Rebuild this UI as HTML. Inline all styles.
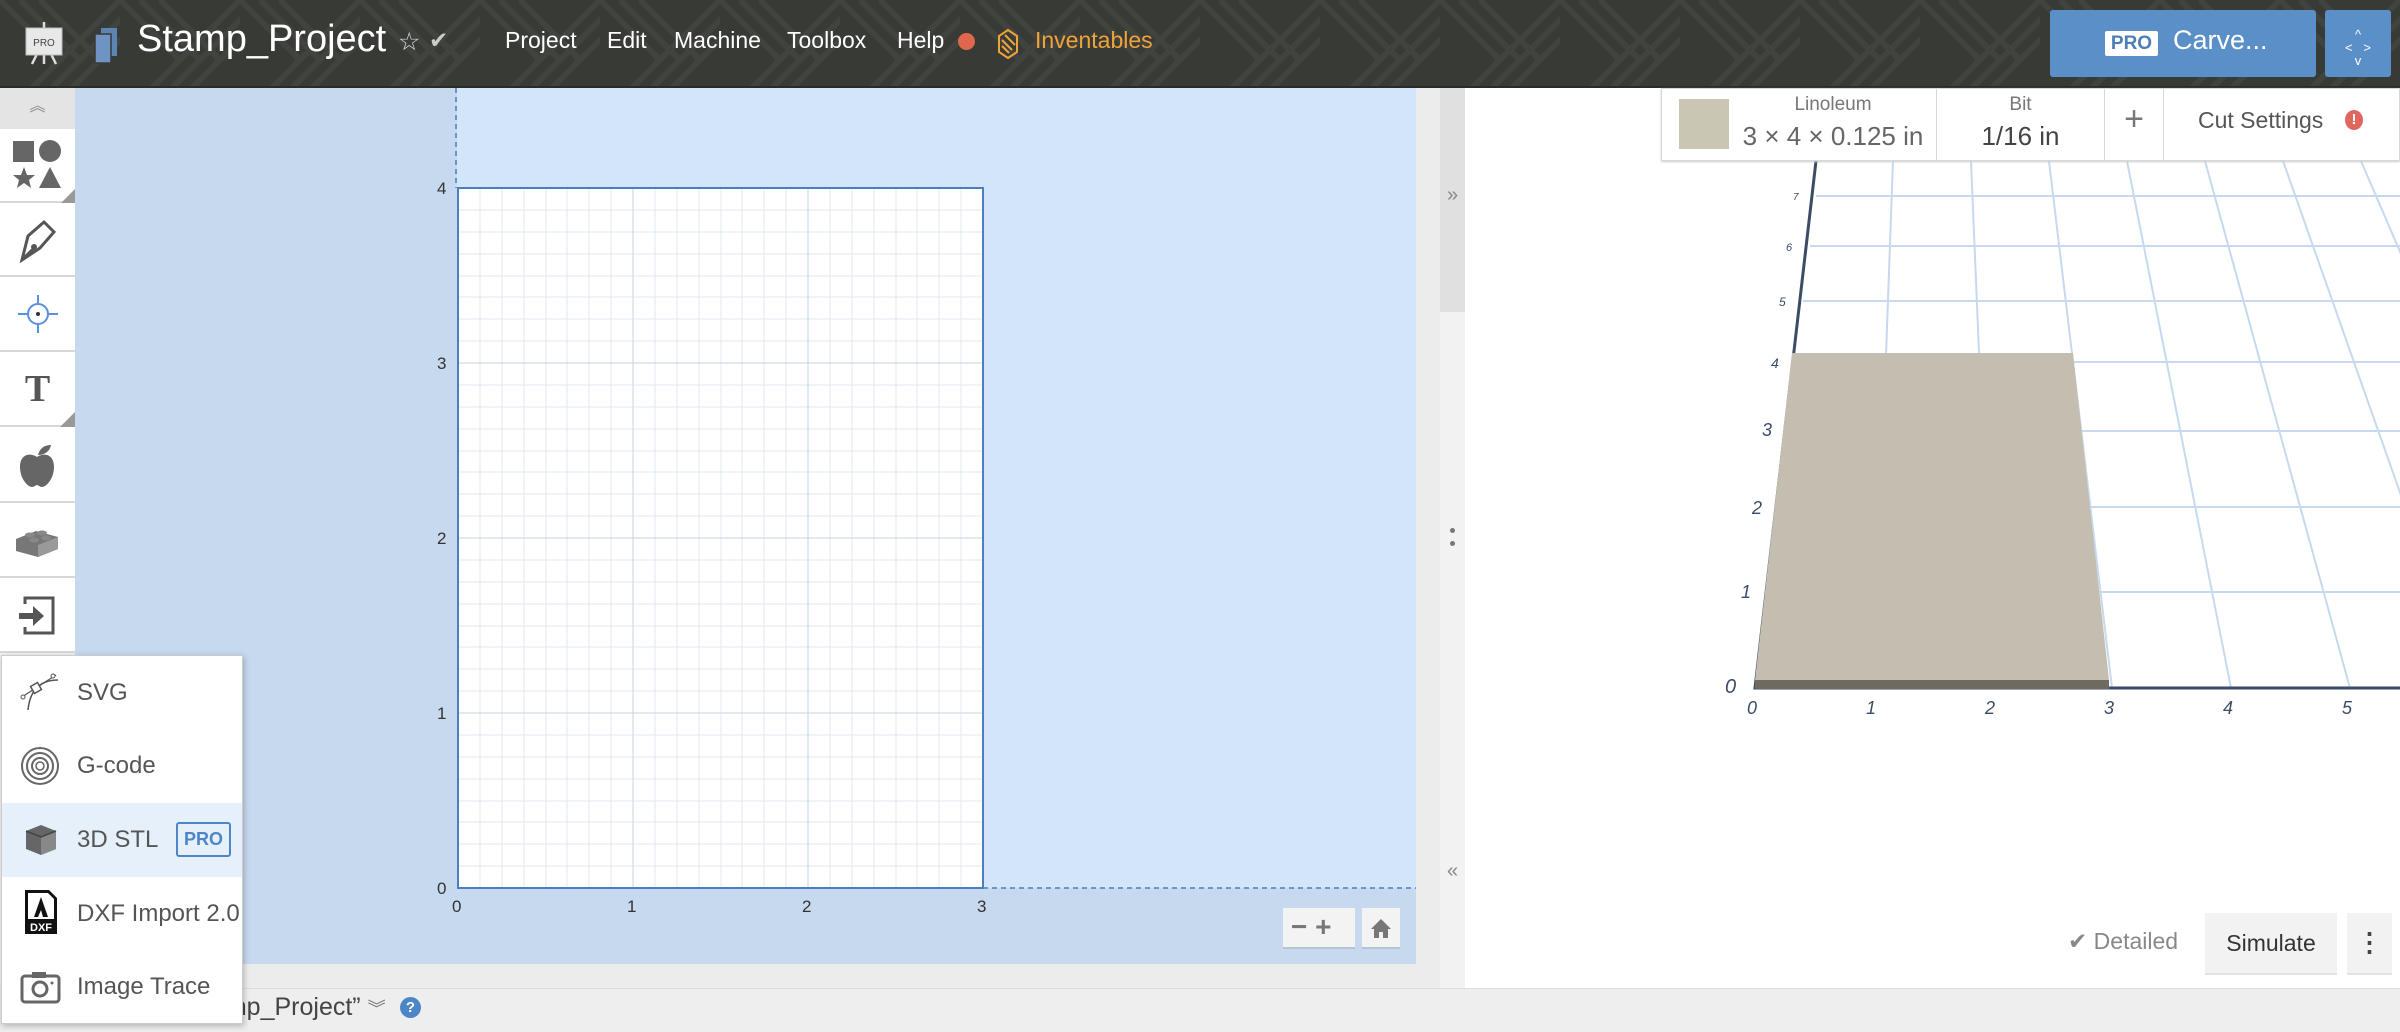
<!DOCTYPE html>
<html><head><meta charset="utf-8"><style>
*{margin:0;padding:0;box-sizing:border-box}
body{width:2400px;height:1032px;overflow:hidden;font-family:"Liberation Sans",sans-serif;background:#fff;position:relative}
.a{position:absolute}
.hdr{left:0;top:0;width:2400px;height:88px;background:#383a36;border-bottom:2px solid #2a2b29}
.menu{color:#fff;font-size:23px;top:27px}
.tb{left:0;width:75px;background:#fff;border-bottom:2px solid #d8d8d8}
.mi{left:2px;width:240px;height:73px;font-size:24px;color:#555;display:flex;align-items:center}
.mi span{position:absolute;left:75px}
</style></head><body>

<!-- header -->
<div class="a hdr">
<svg class="a" style="left:0;top:0" width="2400" height="86">
<defs><pattern id="p" width="120" height="120" patternUnits="userSpaceOnUse">
<path d="M0 0L60 60M20 0L80 60M40 0L100 60M60 60L120 0M80 60L140 0M100 60L160 0M0 120L60 60M20 120L80 60M40 120L100 60" stroke="#41433f" stroke-width="6" fill="none"/></pattern></defs>
<rect width="2400" height="86" fill="url(#p)"/>
</svg>
<svg class="a" style="left:22px;top:20px" width="44" height="48"><path d="M22 2v6M10 44l5-10M34 44l-5-10M22 34v10" stroke="#ddd" stroke-width="2.5"/><rect x="4" y="8" width="36" height="27" fill="#e8e8e8" stroke="#bbb"/><text x="22" y="26" font-size="10" text-anchor="middle" fill="#444" font-family="Liberation Sans">PRO</text></svg>
<svg class="a" style="left:94px;top:28px" width="24" height="36"><rect x="7" y="0" width="16" height="28" fill="#5d85b3"/><rect x="1" y="6" width="16" height="29" fill="#6d94c2" stroke="#383a36" stroke-width="1.5"/></svg>
<div class="a" style="left:137px;top:18px;color:#fff;font-size:38px">Stamp_Project</div>
<div class="a" style="left:398px;top:27px;color:#ddd;font-size:25px">☆</div>
<div class="a" style="left:429px;top:27px;color:#ccc;font-size:23px">✔</div>
<div class="a menu" style="left:505px">Project</div>
<div class="a menu" style="left:607px">Edit</div>
<div class="a menu" style="left:674px">Machine</div>
<div class="a menu" style="left:787px">Toolbox</div>
<div class="a menu" style="left:897px">Help</div>
<div class="a" style="left:958px;top:33px;width:17px;height:17px;border-radius:50%;background:#e0674d"></div>
<svg class="a" style="left:997px;top:28px" width="22" height="32"><path d="M11 2L20 8V24L11 30L2 24V8Z M5 12L15 22M5 18L12 25M8 7L18 17" stroke="#f0a33a" stroke-width="2" fill="none"/></svg>
<div class="a menu" style="left:1035px;color:#f0a33a">Inventables</div>
<div class="a" style="left:2050px;top:10px;width:266px;height:67px;background:#5b8fc7;border-radius:3px"></div>
<div class="a" style="left:2105px;top:31px;width:53px;height:25px;background:#fff;border-radius:2px;color:#4d7eb5;font-weight:bold;font-size:19px;text-align:center;line-height:25px">PRO</div>
<div class="a" style="left:2173px;top:25px;color:#fff;font-size:27px">Carve...</div>
<div class="a" style="left:2325px;top:10px;width:66px;height:67px;background:#5b8fc7;border-radius:3px;color:#fff;font-size:13px;text-align:center;line-height:13px;padding-top:18px">^<br>&lt;&nbsp;&nbsp;&nbsp;&gt;<br>v</div>
</div>

<!-- left toolbar -->
<div class="a" style="left:0;top:88px;width:75px;height:900px;background:#f2f2f2"></div>
<div class="a" style="left:0;top:88px;width:75px;height:41px;background:#e4e4e4;color:#888;text-align:center;font-size:16px;line-height:38px">︽</div>
<div class="a tb" style="top:129px;height:74px"><svg width="75" height="74"><rect x="13" y="12" width="21" height="21" fill="#666"/><circle cx="50" cy="22" r="11" fill="#666"/><path d="M24 38l3 8h8l-6 5 2 8-7-5-7 5 2-8-6-5h8z" fill="#666"/><path d="M50 38l11 21H39z" fill="#666"/><path d="M75 60V74H61z" fill="#999"/></svg></div>
<div class="a tb" style="top:203px;height:74px"><svg width="75" height="74"><path d="M22 57l6-24 16-14 10 10-14 16z M22 57l12-12" stroke="#555" stroke-width="3" fill="none"/><circle cx="34" cy="44" r="3" fill="#555"/></svg></div>
<div class="a tb" style="top:277px;height:75px"><svg width="75" height="75"><circle cx="38" cy="37" r="10" stroke="#5b8fe0" stroke-width="2" fill="none"/><path d="M38 18v10M38 46v10M18 37h10M48 37h10" stroke="#5b8fe0" stroke-width="2"/><circle cx="38" cy="37" r="2" fill="#333"/></svg></div>
<div class="a tb" style="top:352px;height:75px"><div style="font-family:'Liberation Serif',serif;font-weight:bold;font-size:38px;color:#555;text-align:center;line-height:75px">T</div><svg class="a" style="left:0;top:0" width="75" height="75"><path d="M75 60V75H60z" fill="#999"/></svg></div>
<div class="a tb" style="top:427px;height:76px"><svg width="75" height="76"><path d="M37 30c-8-5-17-2-17 10 0 12 8 20 12 20 2 0 4-2 5-2s3 2 5 2c4 0 12-8 12-20 0-12-9-15-17-10z" fill="#666"/><path d="M38 28c2-8 8-10 13-10-1 6-6 10-13 10z" fill="#666"/></svg></div>
<div class="a tb" style="top:503px;height:75px"><svg width="75" height="75"><path d="M16 36l20-8 22 6v12l-20 8-22-6z" fill="#777"/><path d="M38 42v12l20-8V34z" fill="#999"/><ellipse cx="30" cy="32" rx="5" ry="2.5" fill="#888"/><ellipse cx="42" cy="30" rx="5" ry="2.5" fill="#888"/><ellipse cx="34" cy="37" rx="5" ry="2.5" fill="#888"/><ellipse cx="46" cy="35" rx="5" ry="2.5" fill="#888"/></svg></div>
<div class="a tb" style="top:578px;height:75px"><svg width="75" height="75"><path d="M25 26v-6h28v35H25v-6" stroke="#555" stroke-width="3" fill="none"/><path d="M19 35h14v-7l11 10-11 10v-7H19z" fill="#555"/></svg></div>

<!-- canvas -->
<div class="a" style="left:75px;top:88px;width:1341px;height:876px;background:#c6d9ee"></div>
<div class="a" style="left:457px;top:88px;width:959px;height:800px;background:#d2e5f9"></div>
<svg class="a" style="left:75px;top:88px" width="1341" height="876">
<path d="M381 0V100M908 800H1341" stroke="#4a7fc1" stroke-width="1.5" stroke-dasharray="5,4"/>
<rect x="383" y="100" width="525" height="700" fill="#fff"/>
<g stroke="#e1e9f3" stroke-width="1">
<path d="M405 100V800M427 100V800M449 100V800M471 100V800M492 100V800M514 100V800M536 100V800M580 100V800M602 100V800M624 100V800M646 100V800M667 100V800M689 100V800M711 100V800M755 100V800M777 100V800M799 100V800M821 100V800M842 100V800M864 100V800M886 100V800"/>
<path d="M383 122H908M383 144H908M383 166H908M383 188H908M383 209H908M383 231H908M383 253H908M383 297H908M383 319H908M383 341H908M383 363H908M383 384H908M383 406H908M383 428H908M383 472H908M383 494H908M383 516H908M383 538H908M383 559H908M383 581H908M383 603H908M383 647H908M383 669H908M383 691H908M383 713H908M383 734H908M383 756H908M383 778H908"/>
</g>
<path d="M558 100V800M733 100V800M383 275H908M383 450H908M383 625H908" stroke="#c6d3e3" stroke-width="1"/>
<rect x="383" y="100" width="525" height="700" fill="none" stroke="#4a7fc1" stroke-width="2"/>
<g font-size="17" fill="#333" font-family="Liberation Sans">
<text x="362" y="106">4</text><text x="362" y="281">3</text><text x="362" y="456">2</text><text x="362" y="631">1</text><text x="362" y="806">0</text>
<text x="377" y="824">0</text><text x="552" y="824">1</text><text x="727" y="824">2</text><text x="902" y="824">3</text>
</g>
</svg>
<div class="a" style="left:1283px;top:908px;width:72px;height:41px;background:#f3f3f3;border-bottom:2px solid #b5c4d6;color:#777;font-size:28px;font-weight:bold;line-height:38px;padding-left:8px">−&nbsp;+</div>
<div class="a" style="left:1362px;top:908px;width:38px;height:41px;background:#f3f3f3;border-bottom:2px solid #b5c4d6"><svg width="38" height="40"><path d="M19 11l-10 10h3v9h5v-6h4v6h5v-9h3z" fill="#777"/></svg></div>
<div class="a" style="left:1420px;top:854px;width:13px;height:50px;border-radius:7px;background:#b8b8b8"></div>
<div class="a" style="left:75px;top:964px;width:1390px;height:24px;background:#ececec"></div>

<!-- divider strip -->
<div class="a" style="left:1416px;top:88px;width:24px;height:900px;background:#ececec"></div>
<div class="a" style="left:1440px;top:88px;width:25px;height:224px;background:#e0e0e0;color:#888;font-size:20px;text-align:center;padding-top:96px">»</div>
<div class="a" style="left:1440px;top:312px;width:25px;height:676px;background:#f2f2f2"></div>
<div class="a" style="left:1450px;top:528px;width:5px;height:18px;border-left:5px dotted #777"></div>
<div class="a" style="left:1440px;top:860px;width:25px;color:#888;font-size:20px;text-align:center">«</div>

<!-- 3D view -->
<svg class="a" style="left:1465px;top:88px" width="935" height="900">
<g stroke="#c6d9ee" stroke-width="2" fill="none">
<path d="M351 108H935M345 158H935M338 213H935M331 274H935M322 343H935M312 419H935M300 504H935"/>
<path d="M428 73L409 600M506 73L528 600M584 73L647 600M662 73L766 600M740 73L885 600M818 73L1004 600M896 73L1123 600"/>
</g>
<path d="M351 73L290 600H935" stroke="#3a4c66" stroke-width="3" fill="none"/>
<path d="M327 265H608L644 592H290Z" fill="#c3beaf"/>
<rect x="290" y="592" width="354" height="9" fill="#6e6a60"/>
<g font-size="18" font-style="italic" fill="#3a4c66" font-family="Liberation Sans">
<text x="260" y="605" font-size="20">0</text><text x="276" y="510">1</text><text x="287" y="426">2</text><text x="297" y="348">3</text><text x="306" y="280" font-size="14">4</text><text x="314" y="218" font-size="12">5</text><text x="321" y="163" font-size="11">6</text><text x="328" y="112" font-size="10">7</text>
<text x="282" y="626">0</text><text x="401" y="626">1</text><text x="520" y="626">2</text><text x="639" y="626">3</text><text x="758" y="626">4</text><text x="877" y="626">5</text>
</g>
</svg>

<!-- material bar -->
<div class="a" style="left:1661px;top:88px;width:739px;height:73px;background:#fff;border:1px solid #d8d8d8;box-shadow:0 1px 2px #ccc"></div>
<div class="a" style="left:1679px;top:99px;width:50px;height:50px;background:#c9c6b4"></div>
<div class="a" style="left:1730px;top:94px;width:206px;text-align:center;color:#777;font-size:19px">Linoleum</div>
<div class="a" style="left:1730px;top:121px;width:206px;text-align:center;color:#666;font-size:26px">3 × 4 × 0.125 in</div>
<div class="a" style="left:1936px;top:88px;width:1px;height:73px;background:#d8d8d8"></div>
<div class="a" style="left:1937px;top:94px;width:167px;text-align:center;color:#777;font-size:19px">Bit</div>
<div class="a" style="left:1937px;top:121px;width:167px;text-align:center;color:#444;font-size:26px">1/16 in</div>
<div class="a" style="left:2104px;top:88px;width:1px;height:73px;background:#d8d8d8"></div>
<div class="a" style="left:2105px;top:100px;width:58px;text-align:center;color:#777;font-size:34px">+</div>
<div class="a" style="left:2163px;top:88px;width:1px;height:73px;background:#d8d8d8"></div>
<div class="a" style="left:2198px;top:107px;color:#555;font-size:23px">Cut Settings</div>
<div class="a" style="left:2345px;top:110px;width:18px;height:20px;border-radius:50%;background:#e0675d;color:#fff;font-weight:bold;font-size:15px;text-align:center;line-height:20px">!</div>

<!-- bottom right -->
<div class="a" style="left:2068px;top:928px;color:#888;font-size:23px">✔ Detailed</div>
<div class="a" style="left:2205px;top:913px;width:132px;height:62px;background:#f2f2f2;border-bottom:2px solid #e2e2e2;color:#333;font-size:23px;text-align:center;line-height:60px">Simulate</div>
<div class="a" style="left:2347px;top:913px;width:45px;height:62px;background:#f2f2f2;border-bottom:2px solid #e2e2e2;color:#444;font-size:26px;font-weight:bold;text-align:center;line-height:58px">⋮</div>

<!-- status bar -->
<div class="a" style="left:0;top:988px;width:2400px;height:44px;background:#eeeeee;border-top:1px solid #ddd"></div>
<div class="a" style="left:180px;top:993px;color:#444;font-size:25px">“Stamp_Project” <span style="color:#777;font-size:18px">︾</span></div>
<div class="a" style="left:400px;top:997px;width:21px;height:21px;border-radius:50%;background:#4d86c6;color:#fff;font-weight:bold;font-size:15px;text-align:center;line-height:21px">?</div>

<!-- dropdown -->
<div class="a" style="left:1px;top:655px;width:242px;height:369px;background:#fff;border:1px solid #ccc;box-shadow:1px 2px 6px rgba(0,0,0,.25)"></div>
<div class="a mi" style="top:656px"><svg class="a" style="left:16px;top:14px" width="46" height="46"><path d="M10 40c2-20 12-30 30-30" stroke="#555" stroke-width="1.5" fill="none"/><path d="M4 27l34-22" stroke="#555" stroke-width="1.2"/><rect x="14" y="14" width="8" height="8" fill="#fff" stroke="#555" stroke-width="1.5" transform="rotate(-30 18 18)"/><circle cx="5" cy="27" r="2" fill="#fff" stroke="#555"/><circle cx="35" cy="6" r="2" fill="#fff" stroke="#555"/></svg><span>SVG</span></div>
<div class="a mi" style="top:729px"><svg class="a" style="left:18px;top:17px" width="40" height="40"><circle cx="20" cy="20" r="18" stroke="#666" stroke-width="2" fill="none"/><circle cx="20" cy="20" r="13" stroke="#666" stroke-width="2" fill="none"/><circle cx="20" cy="20" r="8" stroke="#666" stroke-width="2" fill="none"/><circle cx="20" cy="20" r="4" stroke="#666" stroke-width="1.5" fill="none"/></svg><span>G-code</span></div>
<div class="a mi" style="top:803px;background:#e6f0fb;height:74px"><svg class="a" style="left:22px;top:20px" width="34" height="34"><path d="M17 2L32 8V26L17 32L2 26V8Z" fill="#666"/><path d="M17 14L32 8V26L17 32Z" fill="#888"/><path d="M2 8l15 6 15-6" stroke="#444" stroke-width="1.5" fill="none"/></svg><span>3D STL</span><div class="a" style="left:174px;top:19px;width:55px;height:35px;border:2px solid #4d86c6;border-radius:3px;color:#4d86c6;font-weight:bold;font-size:18px;text-align:center;line-height:31px">PRO</div></div>
<div class="a mi" style="top:877px"><svg class="a" style="left:22px;top:12px" width="34" height="46"><path d="M1 1H25L33 9V45H1Z" fill="#111"/><path d="M4 4H24L30 10V30H4Z" fill="#fff"/><path d="M10 28L17 8L24 28H19L17 21L14 28Z" fill="#111"/><text x="17" y="42" font-size="11" font-weight="bold" fill="#fff" text-anchor="middle" font-family="Liberation Sans">DXF</text></svg><span style="white-space:nowrap">DXF Import 2.0</span></div>
<div class="a mi" style="top:950px"><svg class="a" style="left:18px;top:20px" width="42" height="34"><rect x="2" y="6" width="37" height="26" rx="3" stroke="#666" stroke-width="3" fill="none"/><rect x="12" y="2" width="14" height="6" fill="#666"/><circle cx="20" cy="19" r="7" stroke="#666" stroke-width="3" fill="none"/><circle cx="32" cy="13" r="1.5" fill="#666"/></svg><span>Image Trace</span></div>
</body></html>
